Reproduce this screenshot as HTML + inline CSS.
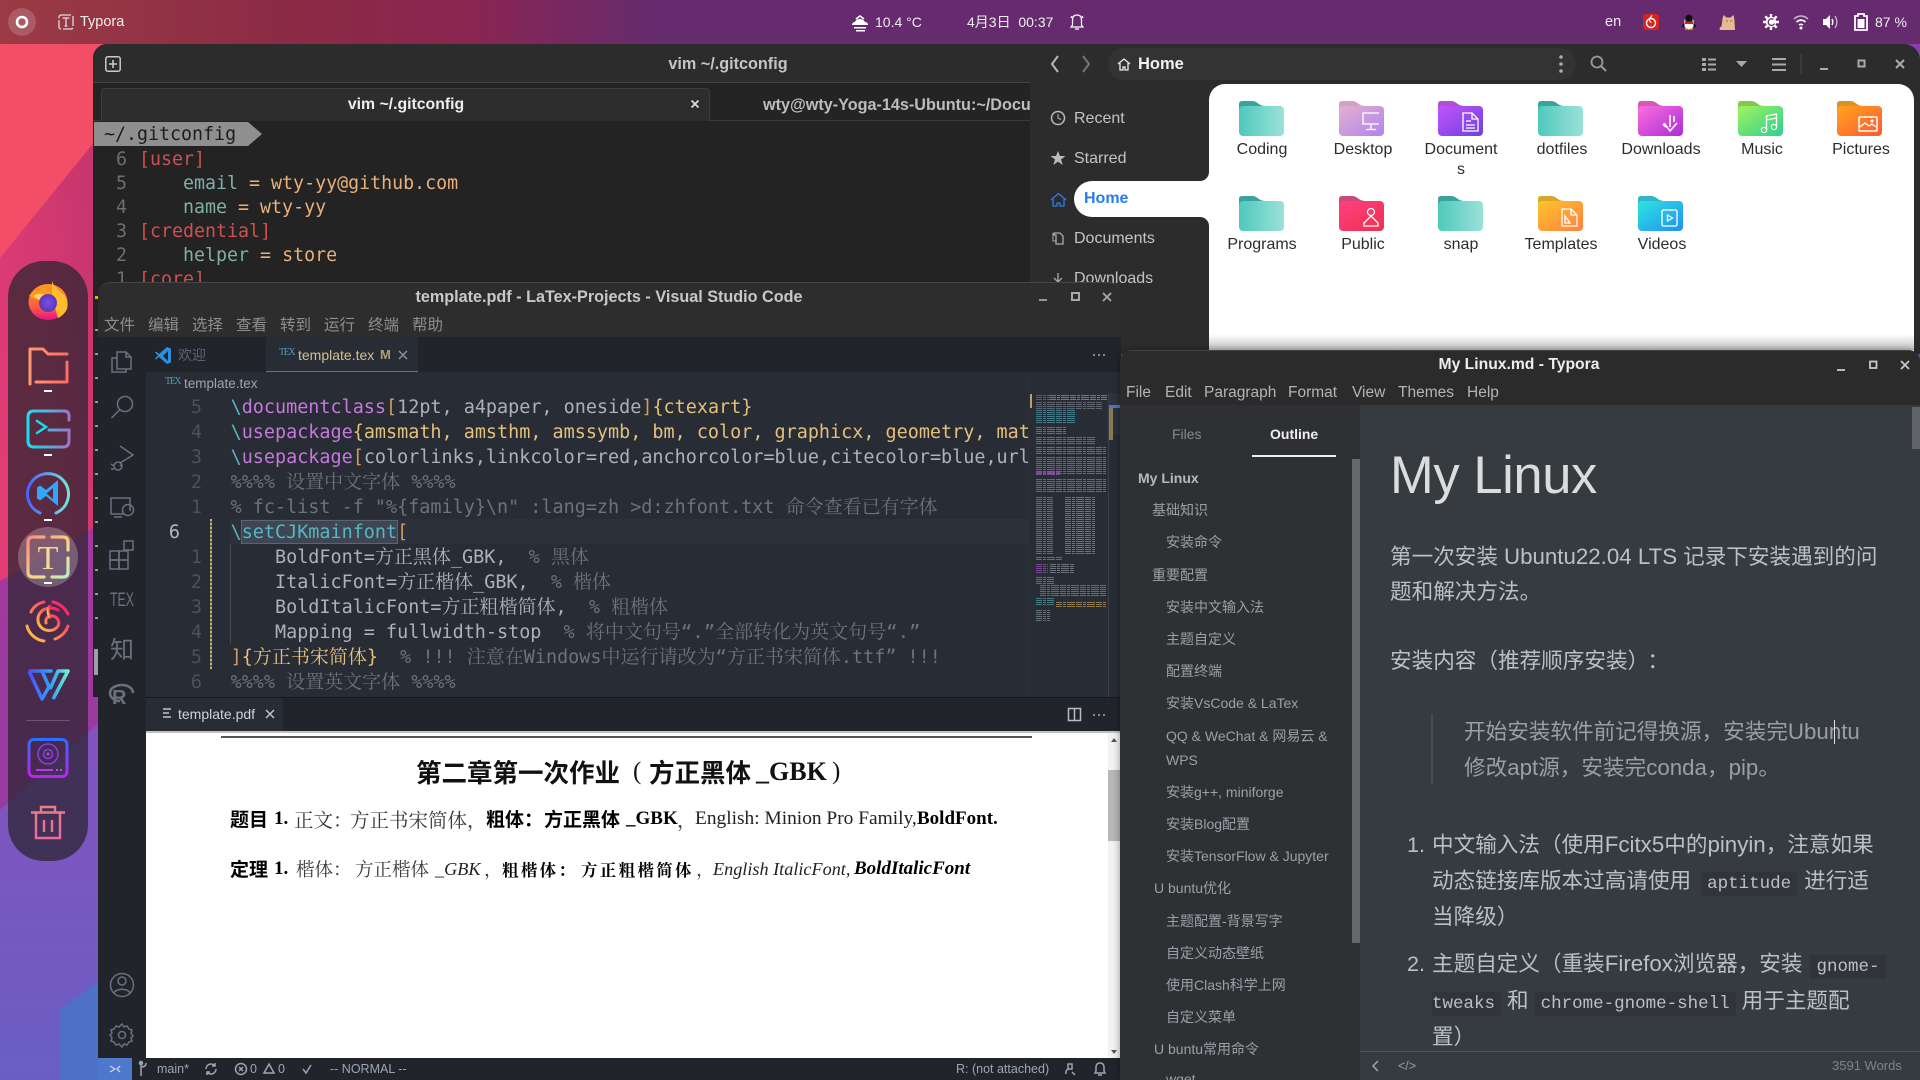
<!DOCTYPE html>
<html lang="zh"><head><meta charset="utf-8"><title>Desktop</title>
<style>
*{box-sizing:border-box;margin:0;padding:0}
html,body{width:1920px;height:1080px;overflow:hidden;background:#662b6e}
body{position:relative;font-family:"Liberation Sans","Noto Sans CJK SC",sans-serif}
.a{position:absolute;white-space:pre}
.c{transform:translateX(-50%)}
svg{position:absolute;overflow:visible}
.tl{position:absolute;font:18.3px/24px "DejaVu Sans Mono",monospace;white-space:pre;margin-top:2px}
.cl{position:absolute;left:84.6px;height:25px;font:18.45px/25px "DejaVu Sans Mono","Noto Serif CJK SC",monospace;white-space:pre;color:#abb2bf;margin-top:1px}
.z{font-size:19px}
.n{position:absolute;width:40px;text-align:right;left:16px;font:18.45px/25px "DejaVu Sans Mono",monospace;color:#495162;margin-top:1px}
.g{color:#6b7280}.p{color:#c678dd}.o{color:#d19a66}.y{color:#e5c07b}.t{color:#56b6c2}
.out{position:absolute;font-size:14px;line-height:20px;color:#9aa0a6;white-space:pre}
.ty{position:absolute;font-size:21.6px;line-height:30px;color:#b9c0c7;white-space:pre}
.e{font-size:22.3px}
.code{font:17.5px "Liberation Mono",monospace;background:#31353a;padding:2px 6px;color:#b9c0c7}
.fl{position:absolute;font-size:16px;line-height:20px;color:#2c2c2c;transform:translateX(-50%);white-space:pre;margin-top:2px}
.side{position:absolute;left:1074px;font-size:16px;line-height:20px;color:#c4c4c4;white-space:pre;margin-top:1px}
.m{position:absolute;font-size:15.5px;line-height:20px;color:#8e8e8e;font-family:"Noto Sans CJK SC",sans-serif}
.mm{position:absolute;background:repeating-linear-gradient(180deg,var(--c) 0 1px,transparent 1px 2px);opacity:.7;-webkit-mask-image:repeating-linear-gradient(90deg,#000 0 6px,transparent 6px 7px,#000 7px 10px,transparent 10px 11px,#000 11px 19px,transparent 19px 20px);mask-image:repeating-linear-gradient(90deg,#000 0 6px,transparent 6px 7px,#000 7px 10px,transparent 10px 11px,#000 11px 19px,transparent 19px 20px)}
.tex{position:absolute;font:10px/18px "Liberation Serif",serif;letter-spacing:-1.4px;color:#4f9bb8}
.pp{position:absolute;line-height:28px;white-space:pre;color:#000}
.s1{font:19.5px/28px "Noto Serif CJK SC",serif;color:#3a3a3a}
.s2{font:bold 19px/28px "Noto Sans CJK SC",sans-serif;color:#000}
.s3{font:19.4px/28px "Liberation Serif",serif;color:#222}
.s4{font:bold 19px/28px "Liberation Serif",serif;color:#000}
.s5{font:18.5px/28px "Noto Serif CJK SC",serif;color:#3a3a3a}
.s6{font:bold 16.5px/28px "Noto Serif CJK SC",serif;color:#000;letter-spacing:2.3px}
.s7{font:italic 18.2px/28px "Liberation Serif",serif;color:#222}
.s8{font:italic bold 19px/28px "Liberation Serif",serif;color:#000}
.ti{position:absolute;top:755px;font:bold 25.5px/34px "Noto Sans CJK SC",sans-serif;color:#111;white-space:pre}
</style></head><body>

<!-- wallpaper -->
<svg style="left:0;top:0" width="1920" height="1080" viewBox="0 0 1920 1080">
<defs>
<linearGradient id="w2" x1="0" y1="1" x2="1" y2="0"><stop offset="0" stop-color="#f03f7c"/><stop offset="1" stop-color="#c4356c"/></linearGradient>
<linearGradient id="w3" x1="0" y1="0" x2="0" y2="1"><stop offset="0" stop-color="#a23a9e"/><stop offset="1" stop-color="#8e3aa2"/></linearGradient>
<linearGradient id="w4" x1="0" y1="0" x2="0" y2="1"><stop offset="0" stop-color="#8452be"/><stop offset="1" stop-color="#6a5ec4"/></linearGradient>
</defs>
<rect width="1920" height="1080" fill="#f34e67"/>
<polygon points="100,135 0,258 0,1080 100,1080" fill="url(#w2)"/>
<polygon points="100,524 0,581 0,1080 100,1080" fill="url(#w3)"/>
<polygon points="100,722 0,810 0,1080 100,1080" fill="url(#w4)"/>
<polygon points="100,980 60,1010 60,1080 100,1080" fill="#4e70c6"/>
<rect x="1000" y="40" width="920" height="320" fill="#8a3cb0"/>
</svg>

<!-- top bar -->
<div class="a" style="left:0;top:0;width:1920px;height:44px;background:linear-gradient(90deg,#9a3b45 0,#8c2b45 280px,#8a2550 470px,#662b6e 650px,#662b6e 100%)"></div>
<svg style="left:0;top:0" width="1920" height="44" viewBox="0 0 1920 44">
<circle cx="22" cy="22" r="14" fill="#fff" fill-opacity=".17"/>
<circle cx="22" cy="22" r="5" fill="none" stroke="#fff" stroke-width="2.6"/>
<rect x="59" y="15" width="14" height="14" rx="2" fill="none" stroke="#ddd" stroke-width="1.3" stroke-dasharray="10 2"/>
<path d="M62.5 18h7M66 18v8M64.5 26h3" stroke="#ddd" stroke-width="1.3" fill="none"/>
<path d="M852 25c0-2 1.5-3 3-3 1-4 8-4 10 0 2 0 3 1.5 3 3z" fill="#fff"/><path d="M854 27h12v1.5h-12zM856 30h9v1.5h-9z" fill="#fff"/><path d="M856 19l4-3 4 3" stroke="#fff" stroke-width="1.6" fill="none"/>
<path d="M1077 15c-3 0-4.5 2-4.5 5v5l-1.5 2h12l-1.5-2v-5c0-3-1.5-5-4.5-5zM1075 29h4M1072 16l-1 2M1082 16l1 2" fill="none" stroke="#fff" stroke-width="1.2"/>
<rect x="1643" y="14" width="16" height="16" rx="3" fill="#d9241b"/><circle cx="1651" cy="23" r="4.5" fill="none" stroke="#fff" stroke-width="1.4"/><path d="M1652 15.5l-2 2.5c-1 1.500-.5 4 1.500 4.500" stroke="#fff" stroke-width="1.2" fill="none"/>
<ellipse cx="1689" cy="23" rx="5" ry="6.5" fill="#fff"/><ellipse cx="1689" cy="19" rx="3.8" ry="4.5" fill="#111"/><rect x="1684.5" y="21.5" width="9" height="2.5" fill="#d81e28"/><path d="M1685 29h3M1690 29h3" stroke="#e8a020" stroke-width="1.5"/><path d="M1684 24l-1.5 3M1694 24l1.5 3" stroke="#111" stroke-width="1.8"/>
<path d="M1720 30c-1-2 0-3 1.5-3.500l1-7.500 1-4 3 2.500h4l3-2.500.8 4 .7 11z" fill="#e4bc92"/><circle cx="1727" cy="21" r=".7" fill="#654"/><circle cx="1731" cy="21" r=".7" fill="#654"/>
<circle cx="1771" cy="22" r="5.3" fill="#fff"/><path d="M1771 14v16M1763 22h16M1765.3 16.3l11.4 11.4M1776.7 16.3l-11.4 11.4" stroke="#fff" stroke-width="2.4"/><path d="M1773.5 19.5a3.3 3.3 0 1 0 1 4" fill="none" stroke="#662b6e" stroke-width="1.3"/>
<path d="M1794 19c4-4 10-4 14 0" stroke="#cdb7d2" stroke-width="1.5" fill="none"/><path d="M1796.5 22c3-2.5 6-2.5 9 0M1799 25c1.5-1 2.5-1 4 0" stroke="#fff" stroke-width="1.6" fill="none"/><circle cx="1801" cy="28" r="1.5" fill="#fff"/>
<path d="M1823 19h3l4-4v14l-4-4h-3z" fill="#fff"/><path d="M1832 19c1 2 1 4 0 6" stroke="#fff" stroke-width="1.5" fill="none"/><path d="M1835 16c2.5 4 2.500 8 0 12" stroke="#c8aecd" stroke-width="1.3" fill="none"/>
<path d="M1858 16v-2h6v2h3v14h-12v-14z" fill="none" stroke="#fff" stroke-width="1.8"/><rect x="1857.5" y="19" width="7" height="9" fill="#fff"/>
</svg>
<div class="a" style="left:80px;top:12px;font-size:14.5px;line-height:20px;color:#eee">Typora</div>
<div class="a" style="left:875px;top:12px;font-size:14px;line-height:20px;color:#eee">10.4 °C</div>
<div class="a" style="left:967px;top:12px;font-size:14px;line-height:20px;color:#eee">4月3日  00:37</div>
<div class="a" style="left:1605px;top:12px;font-size:14.5px;line-height:20px;color:#eee">en</div>
<div class="a" style="left:1875px;top:12px;font-size:14px;line-height:20px;color:#eee">87 %</div>

<!-- terminal -->
<div class="a" style="left:93px;top:44px;width:950px;height:653px;background:#232323;border-radius:14px 0 0 0;overflow:hidden">
<div class="a" style="left:0;top:0;width:950px;height:39px;background:#2c2c2c;border-bottom:1px solid #444"></div>
<div class="a" style="left:0;top:39px;width:950px;height:38px;background:#242424;border-bottom:1px solid #3a3a3a"></div>
<div class="a" style="left:8px;top:44px;width:609px;height:33px;background:#2d2d2d;border:1px solid #3d3d3d;border-bottom:0;border-radius:4px 4px 0 0"></div>
<div class="a c" style="left:635px;top:10px;font-size:16.2px;font-weight:bold;line-height:20px;color:#c4c4c4">vim ~/.gitconfig</div>
<div class="a c" style="left:313px;top:51px;font-size:15.8px;font-weight:bold;line-height:20px;color:#eee">vim ~/.gitconfig</div>
<div class="a" style="left:670px;top:51px;font-size:16.2px;font-weight:bold;line-height:20px;color:#bdbdbd">wty@wty-Yoga-14s-Ubuntu:~/Documents</div>
<div class="a" style="left:1px;top:78px;width:154px;height:24px;background:#8f8f8f"></div>
<div class="tl" style="left:11px;top:78px;color:#1c1c1c;margin-top:1px">~/.gitconfig</div>
<svg style="left:155px;top:78px" width="14" height="24"><path d="M0 0L14 12L0 24Z" fill="#8f8f8f"/></svg>
<div class="tl" style="left:23px;top:102px;color:#6e6e6e">6</div><div class="tl" style="left:46px;top:102px;color:#d0504f">[user]</div>
<div class="tl" style="left:23px;top:126px;color:#6e6e6e">5</div><div class="tl" style="left:90px;top:126px;color:#e8b07c"><span style="color:#7fb0a8">email</span> = wty-yy@github.com</div>
<div class="tl" style="left:23px;top:150px;color:#6e6e6e">4</div><div class="tl" style="left:90px;top:150px;color:#e8b07c"><span style="color:#7fb0a8">name</span> = wty-yy</div>
<div class="tl" style="left:23px;top:174px;color:#6e6e6e">3</div><div class="tl" style="left:46px;top:174px;color:#d0504f">[credential]</div>
<div class="tl" style="left:23px;top:198px;color:#6e6e6e">2</div><div class="tl" style="left:90px;top:198px;color:#e8b07c"><span style="color:#7fb0a8">helper</span> = store</div>
<div class="tl" style="left:23px;top:222px;color:#6e6e6e">1</div><div class="tl" style="left:46px;top:222px;color:#d0504f">[core]</div>
<svg style="left:12px;top:12px" width="16" height="16"><rect x=".8" y=".8" width="14.4" height="14.4" rx="2" fill="none" stroke="#c8c8c8" stroke-width="1.5"/><path d="M8 4v8M4 8h8" stroke="#c8c8c8" stroke-width="1.6"/></svg>
<svg style="left:597px;top:55px" width="10" height="10"><path d="M1.5 1.5l7 7M8.5 1.5l-7 7" stroke="#ddd" stroke-width="1.8"/></svg>
<div class="a" style="left:2px;top:252px;width:3px;height:3px;background:#d8b020"></div>
<div class="a" style="left:2px;top:285px;width:3px;height:310px;background:repeating-linear-gradient(180deg,#9a9a9a 0 2px,transparent 2px 24px)"></div>
<div class="a" style="left:1px;top:605px;width:4px;height:26px;background:#a0a0a0"></div>
</div>

<!-- nautilus -->
<div class="a" style="left:1030px;top:44px;width:890px;height:310px;background:#2c2c2c;border-radius:16px 16px 0 0;overflow:hidden">
<div class="a" style="left:179px;top:40px;width:705px;height:280px;background:#fff;border-radius:16px 16px 0 0"></div>
<div class="a" style="left:179px;top:290px;width:705px;height:16px;background:linear-gradient(180deg,#fff,#c4c4c4)"></div>
<div class="a" style="left:167px;top:125px;width:12px;height:60px;background:#fff"></div>
<div class="a" style="left:155px;top:113px;width:24px;height:24px;background:#2c2c2c;border-radius:0 0 9px 0"></div>
<div class="a" style="left:155px;top:173px;width:24px;height:24px;background:#2c2c2c;border-radius:0 9px 0 0"></div>
<div class="a" style="left:44px;top:137px;width:135px;height:36px;background:#fff;border-radius:18px 0 0 18px"></div>
<div class="a" style="left:78px;top:4px;width:468px;height:32px;background:#333;border-radius:16px"></div>
</div>
<div class="a" style="left:1138px;top:54px;font-size:16.5px;font-weight:bold;line-height:20px;color:#f2f2f2">Home</div>
<div class="side" style="top:108px">Recent</div>
<div class="side" style="top:148px">Starred</div>
<div class="side" style="top:188px;left:1084px;color:#2a7bf0;font-weight:bold">Home</div>
<div class="side" style="top:228px">Documents</div>
<div class="side" style="top:268px">Downloads</div>
<svg style="left:1030px;top:44px" width="890" height="240" viewBox="1030 44 890 240">
<path d="M1058 56l-6 8 6 8" stroke="#b8b8b8" stroke-width="2" fill="none"/><path d="M1083 56l6 8-6 8" stroke="#777" stroke-width="2" fill="none"/>
<path d="M1118 64l6-5 6 5M1120 63v7h3v-3h2v3h3v-7" stroke="#eee" stroke-width="1.3" fill="none"/>
<circle cx="1561" cy="57" r="1.8" fill="#aaa"/><circle cx="1561" cy="64" r="1.8" fill="#aaa"/><circle cx="1561" cy="71" r="1.8" fill="#aaa"/>
<circle cx="1597" cy="62" r="5.5" fill="none" stroke="#999" stroke-width="1.8"/><path d="M1601 66l5 5" stroke="#999" stroke-width="2"/>
<path d="M1702 58h4v3h-4zM1702 63h4v3h-4zM1702 68h4v3h-4z" fill="#aaa"/><path d="M1708 59.5h8M1708 64.5h8M1708 69.5h8" stroke="#aaa" stroke-width="2"/>
<path d="M1736 61h11l-5.5 6z" fill="#aaa"/>
<path d="M1772 59h14M1772 64.5h14M1772 70h14" stroke="#aaa" stroke-width="2"/>
<path d="M1801 54v20" stroke="#4a4a4a"/>
<path d="M1820 69h8" stroke="#aaa" stroke-width="2"/><rect x="1858.5" y="60.5" width="6" height="6" fill="none" stroke="#aaa" stroke-width="2"/><path d="M1896 60l8 8M1904 60l-8 8" stroke="#aaa" stroke-width="2"/>
<circle cx="1058" cy="118" r="6.5" fill="none" stroke="#bbb" stroke-width="1.5"/><path d="M1058 114v4l3 1.5" stroke="#bbb" fill="none"/>
<path d="M1058 151l2 5h5.500l-4.500 3.500 1.700 5.500-4.700-3.400-4.700 3.400 1.700-5.500-4.500-3.500h5.500z" fill="#bbb"/>
<path d="M1051 200l7.500-6.500 7.500 6.500M1053 199v7h4v-3h3v3h4v-7" stroke="#2a7bf0" stroke-width="1.3" fill="none"/>
<path d="M1054 233h6l3 3v8h-7v-9h-2z" fill="none" stroke="#aaa" stroke-width="1.3"/><path d="M1053 233v8h3" fill="none" stroke="#aaa"/>
<path d="M1058 273v8M1054 278l4 4 4-4" fill="none" stroke="#aaa" stroke-width="1.3"/>
</svg>
<!-- folders -->
<svg style="left:1230px;top:95px" width="680" height="150" viewBox="1230 95 680 150">
<defs>
<linearGradient id="ft"><stop offset="0" stop-color="#4fc9bd"/><stop offset="1" stop-color="#9be1d8"/></linearGradient>
<linearGradient id="fd" x1="0" y1="0" x2="1" y2="1"><stop offset="0" stop-color="#e5b0ce"/><stop offset="1" stop-color="#ae84f0"/></linearGradient>
<linearGradient id="fo" x1="0" y1="0" x2="1" y2="1"><stop offset="0" stop-color="#c454fa"/><stop offset="1" stop-color="#6c40e0"/></linearGradient>
<linearGradient id="fw" x1="0" y1="0" x2="1" y2="1"><stop offset="0" stop-color="#fa6edc"/><stop offset="1" stop-color="#ae2cd8"/></linearGradient>
<linearGradient id="fm" x1="0" y1="0" x2="1" y2="1"><stop offset="0" stop-color="#a2f25e"/><stop offset="1" stop-color="#2cd090"/></linearGradient>
<linearGradient id="fp" x1="0" y1="0" x2="1" y2="1"><stop offset="0" stop-color="#ffa41c"/><stop offset="1" stop-color="#ff5834"/></linearGradient>
<linearGradient id="fu" x1="0" y1="0" x2="1" y2="1"><stop offset="0" stop-color="#ff4080"/><stop offset="1" stop-color="#ef3050"/></linearGradient>
<linearGradient id="fl" x1="0" y1="0" x2="1" y2="1"><stop offset="0" stop-color="#ffc42c"/><stop offset="1" stop-color="#ff8040"/></linearGradient>
<linearGradient id="fv" x1="0" y1="0" x2="1" y2="1"><stop offset="0" stop-color="#2ee4e0"/><stop offset="1" stop-color="#2090f0"/></linearGradient>
<path id="ftab" d="M0 9V3q0-3 3-3h10c6 0 6 5 14 5v4z"/>
<rect id="fb" y="5" width="45" height="30" rx="4"/>
</defs>
<g transform="translate(1239,101)"><use href="#ftab" fill="#3aa39c"/><use href="#fb" fill="url(#ft)"/></g>
<g transform="translate(1339,101)"><use href="#ftab" fill="#d4a2bc"/><use href="#fb" fill="url(#fd)"/><g fill="none" stroke="#fff" stroke-width="1.3"><path d="M40 12H24v11h16M32 23v5M27 28.5h10"/></g></g>
<g transform="translate(1438,101)"><use href="#ftab" fill="#b050d6"/><use href="#fb" fill="url(#fo)"/><g fill="none" stroke="#fff" stroke-width="1.3"><path d="M25 12h9l6 6v12H25zM34 12v6h6M28 20h5M28 24h9M28 27h9"/></g></g>
<g transform="translate(1538,101)"><use href="#ftab" fill="#3aa39c"/><use href="#fb" fill="url(#ft)"/></g>
<g transform="translate(1638,101)"><use href="#ftab" fill="#d458b4"/><use href="#fb" fill="url(#fw)"/><g fill="none" stroke="#fff" stroke-width="1.6"><path d="M32 14v12M25 23c1 2 3 3 4 3M26 22l6 8 7-8M36 15v6"/></g></g>
<g transform="translate(1738,101)"><use href="#ftab" fill="#86c648"/><use href="#fb" fill="url(#fm)"/><g fill="none" stroke="#fff" stroke-width="1.3"><circle cx="26" cy="29" r="2.6"/><circle cx="36" cy="26" r="2.6"/><path d="M28.5 29V15l10-2v13M28.5 19l10-2"/></g></g>
<g transform="translate(1837,101)"><use href="#ftab" fill="#d89228"/><use href="#fb" fill="url(#fp)"/><rect x="22" y="16" width="18" height="14" rx="1" fill="none" stroke="#fff" stroke-width="1.5"/><path d="M23 26l5-4 4 3 3-2 4 3" stroke="#fff" fill="none" stroke-width="1.3"/><circle cx="35" cy="20" r="1.5" fill="#fff"/></g>
<g transform="translate(1239,196)"><use href="#ftab" fill="#3aa39c"/><use href="#fb" fill="url(#ft)"/></g>
<g transform="translate(1339,196)"><use href="#ftab" fill="#cc4878"/><use href="#fb" fill="url(#fu)"/><g fill="none" stroke="#fff" stroke-width="1.3"><circle cx="32" cy="16" r="3.5"/><path d="M32 20l7 7v3H25v-3z"/></g></g>
<g transform="translate(1438,196)"><use href="#ftab" fill="#3aa39c"/><use href="#fb" fill="url(#ft)"/></g>
<g transform="translate(1538,196)"><use href="#ftab" fill="#d8a82e"/><use href="#fb" fill="url(#fl)"/><g fill="none" stroke="#fff" stroke-width="1.3"><path d="M24 13h9l6 6v11H24zM33 13v6h6M27 20l5 7h-5z"/></g></g>
<g transform="translate(1638,196)"><use href="#ftab" fill="#2eb8c6"/><use href="#fb" fill="url(#fv)"/><g fill="none" stroke="#fff" stroke-width="1.3"><rect x="24" y="14" width="15" height="16" rx="1.5"/><path d="M29.5 19l5 3-5 3z"/></g></g>
</svg>
<div class="fl" style="left:1262px;top:138px">Coding</div>
<div class="fl" style="left:1363px;top:138px">Desktop</div>
<div class="fl" style="left:1461px;top:138px">Document</div>
<div class="fl" style="left:1461px;top:158px">s</div>
<div class="fl" style="left:1562px;top:138px">dotfiles</div>
<div class="fl" style="left:1661px;top:138px">Downloads</div>
<div class="fl" style="left:1762px;top:138px">Music</div>
<div class="fl" style="left:1861px;top:138px">Pictures</div>
<div class="fl" style="left:1262px;top:233px">Programs</div>
<div class="fl" style="left:1363px;top:233px">Public</div>
<div class="fl" style="left:1461px;top:233px">snap</div>
<div class="fl" style="left:1561px;top:233px">Templates</div>
<div class="fl" style="left:1662px;top:233px">Videos</div>

<!-- vscode -->
<div class="a" style="left:98px;top:282px;width:1023px;height:798px;background:#21252b;border-radius:12px 12px 0 0;overflow:hidden;border-top:1px solid #444">
<div class="a" style="left:0;top:0;width:1023px;height:54px;background:#2d2d2d"></div>
<div class="a c" style="left:511px;top:4px;font-size:16.2px;font-weight:bold;line-height:20px;color:#c8c8c8">template.pdf - LaTex-Projects - Visual Studio Code</div>
<div class="m" style="left:6px;top:31px">文件</div><div class="m" style="left:50px;top:31px">编辑</div><div class="m" style="left:94px;top:31px">选择</div><div class="m" style="left:138px;top:31px">查看</div><div class="m" style="left:182px;top:31px">转到</div><div class="m" style="left:226px;top:31px">运行</div><div class="m" style="left:270px;top:31px">终端</div><div class="m" style="left:314px;top:31px">帮助</div>
</div>
<div class="a" style="left:146px;top:372px;width:975px;height:325px;background:#282c34"></div>
<div class="a" style="left:266px;top:337px;width:152px;height:35px;background:#282c34;border-bottom:1px solid #6a6f78"></div>
<div class="a" style="left:146px;top:697px;width:975px;height:35px;background:#21252b;border-top:1px solid #16181c"></div>
<div class="a" style="left:146px;top:697px;width:137px;height:35px;background:#282c34;border-top:1px solid #16181c;border-bottom:1px solid #8a8f96"></div>
<div class="a" style="left:146px;top:732px;width:975px;height:326px;background:#fff"></div>
<div class="a" style="left:146px;top:731px;width:975px;height:2px;background:#c0c0c0"></div>
<div class="a" style="left:98px;top:1058px;width:1023px;height:22px;background:#21252b"></div>
<div class="a" style="left:98px;top:1058px;width:34px;height:22px;background:#4d78cc"></div>

<!-- tabs text -->
<div class="a" style="left:178px;top:345px;font:14px/20px 'Noto Sans CJK SC',sans-serif;color:#5c6370">欢迎</div>
<div class="tex" style="left:279px;top:344px">TEX</div>
<div class="a" style="left:298px;top:345px;font-size:14px;line-height:20px;color:#d7c08c">template.tex</div>
<div class="a" style="left:380px;top:345px;font-size:13px;font-weight:bold;line-height:20px;color:#b0a070">M</div>
<div class="tex" style="left:165px;top:373px">TEX</div>
<div class="a" style="left:184px;top:374px;font-size:13.5px;line-height:20px;color:#9da5b4">template.tex</div>
<div class="a" style="left:178px;top:704px;font-size:14px;line-height:20px;color:#d0d4da">template.pdf</div>

<!-- code -->
<div class="a" style="left:146px;top:394px;width:882px;height:303px;overflow:hidden">
<div class="a" style="left:84px;top:125px;width:798px;height:25px;background:#2c313c"></div>
<div class="a" style="left:95px;top:126px;width:157px;height:24px;background:#3e4653;border:1px solid #5b6472"></div>
<div class="a" style="left:64px;top:125px;width:2px;height:150px;background:repeating-linear-gradient(180deg,#c9b56f 0 2px,#6b6448 2px 4px)"></div>
<div class="a" style="left:84px;top:150px;width:1px;height:100px;background:#444a55"></div>
<div class="n" style="top:0">5</div><div class="n" style="top:25px">4</div><div class="n" style="top:50px">3</div><div class="n" style="top:75px">2</div><div class="n" style="top:100px">1</div>
<div class="n" style="top:125px;left:-6px;color:#b3bac6">6</div>
<div class="n" style="top:150px">1</div><div class="n" style="top:175px">2</div><div class="n" style="top:200px">3</div><div class="n" style="top:225px">4</div><div class="n" style="top:250px">5</div><div class="n" style="top:275px">6</div>
<div class="cl" style="top:0"><span class="t">\</span><span class="p">documentclass</span><span class="o">[</span>12pt, a4paper, oneside<span class="o">]</span><span class="y">{ctexart}</span></div>
<div class="cl" style="top:25px"><span class="t">\</span><span class="p">usepackage</span><span class="y">{amsmath, amsthm, amssymb, bm, color, graphicx, geometry, mathtools}</span></div>
<div class="cl" style="top:50px"><span class="t">\</span><span class="p">usepackage</span><span class="o">[</span>colorlinks,linkcolor=red,anchorcolor=blue,citecolor=blue,urlcolor=blue<span class="o">]</span></div>
<div class="cl g" style="top:75px">%%%% <span class="z">设置中文字体</span> %%%%</div>
<div class="cl g" style="top:100px">% fc-list -f "%{family}\n" :lang=zh &gt;d:zhfont.txt <span class="z">命令查看已有字体</span></div>
<div class="cl" style="top:125px"><span class="t">\setCJKmainfont</span><span class="o">[</span></div>
<div class="cl" style="top:150px">    BoldFont=<span class="z">方正黑体</span>_GBK,  <span class="g">% <span class="z">黑体</span></span></div>
<div class="cl" style="top:175px">    ItalicFont=<span class="z">方正楷体</span>_GBK,  <span class="g">% <span class="z">楷体</span></span></div>
<div class="cl" style="top:200px">    BoldItalicFont=<span class="z">方正粗楷简体</span>,  <span class="g">% <span class="z">粗楷体</span></span></div>
<div class="cl" style="top:225px">    Mapping = fullwidth-stop  <span class="g">% <span class="z">将中文句号“.”全部转化为英文句号“.”</span></span></div>
<div class="cl" style="top:250px"><span class="o">]</span><span class="y">{<span class="z">方正书宋简体</span>}</span>  <span class="g">% !!! <span class="z">注意在</span>Windows<span class="z">中运行请改为“方正书宋简体</span>.ttf” !!!</span></div>
<div class="cl g" style="top:275px">%%%% <span class="z">设置英文字体</span> %%%%</div>
</div>

<!-- minimap -->
<div class="a" style="left:1028px;top:372px;width:93px;height:325px;background:#282c34;border-left:1px solid #2d3139"></div>
<div class="a" style="left:1108px;top:393px;width:1px;height:304px;background:#3a3f4a"></div>
<div class="a" style="left:1109px;top:393px;width:12px;height:42px;background:#2f333b"></div>
<div class="a" style="left:1109px;top:405px;width:12px;height:3px;background:#4d78cc"></div>
<div class="a" style="left:1109px;top:408px;width:4px;height:32px;background:#8a7a50"></div>
<div class="a" style="left:1030px;top:394px;width:2px;height:14px;background:#b8a566"></div>
<div class="mm" style="--c:#a050c0;left:1036px;top:395px;width:14px;height:6px"></div>
<div class="mm" style="--c:#b89858;left:1050px;top:395px;width:57px;height:6px"></div>
<div class="mm" style="--c:#777d88;left:1036px;top:402px;width:66px;height:8px"></div>
<div class="mm" style="--c:#4f9ea8;left:1036px;top:410px;width:40px;height:14px"></div>
<div class="mm" style="--c:#4f9ea8;left:1036px;top:427px;width:30px;height:7px"></div>
<div class="mm" style="--c:#7a8a90;left:1036px;top:437px;width:60px;height:7px"></div>
<div class="mm" style="--c:#4f9ea8;left:1036px;top:447px;width:70px;height:8px"></div>
<div class="mm" style="--c:#35a8b0;left:1036px;top:457px;width:70px;height:18px"></div>
<div class="mm" style="--c:#a050c0;left:1036px;top:472px;width:24px;height:3px"></div>
<div class="mm" style="--c:#35a8b0;left:1036px;top:479px;width:70px;height:14px"></div>
<div class="mm" style="--c:#35a8b0;left:1036px;top:497px;width:17px;height:58px"></div>
<div class="mm" style="--c:#8a909a;left:1065px;top:497px;width:30px;height:58px"></div>
<div class="mm" style="--c:#4f9ea8;left:1036px;top:557px;width:26px;height:4px"></div>
<div class="mm" style="--c:#a050c0;left:1036px;top:564px;width:12px;height:10px"></div>
<div class="mm" style="--c:#8a909a;left:1050px;top:564px;width:24px;height:10px"></div>
<div class="mm" style="--c:#4f9ea8;left:1036px;top:577px;width:18px;height:8px"></div>
<div class="mm" style="--c:#35a8b0;left:1040px;top:585px;width:66px;height:12px"></div>
<div class="mm" style="--c:#4f9ea8;left:1036px;top:598px;width:18px;height:8px"></div>
<div class="mm" style="--c:#b89858;left:1056px;top:602px;width:50px;height:6px"></div>
<div class="mm" style="--c:#7a8a90;left:1036px;top:610px;width:14px;height:12px"></div>

<!-- pdf -->
<div class="a" style="left:221px;top:736px;width:811px;height:2px;background:#555"></div>
<div class="ti" style="left:416px">第二章第一次作业</div>
<div class="ti" style="left:633px;font:25px/34px 'Liberation Serif',serif">(</div>
<div class="ti" style="left:649px">方正黑体</div>
<div class="ti" style="left:756px;font:bold 26px/34px 'Liberation Serif',serif">_GBK</div>
<div class="ti" style="left:832px;font:25px/34px 'Liberation Serif',serif">)</div>

<div class="pp s2" style="left:230px;top:805px">题目</div>
<div class="pp s4" style="left:274px;top:805px">1.</div>
<div class="pp s1" style="left:294px;top:805px">正文：</div>
<div class="pp s1" style="left:350px;top:805px">方正书宋简体，</div>
<div class="pp s2" style="left:486px;top:805px">粗体：</div>
<div class="pp s2" style="left:544px;top:805px">方正黑体</div>
<div class="pp s4" style="left:626px;top:805px">_GBK</div>
<div class="pp s1" style="left:677px;top:805px">，</div>
<div class="pp s3" style="left:695px;top:805px">English: Minion Pro Family,</div>
<div class="pp s4" style="left:917px;top:805px">BoldFont.</div>

<div class="pp s2" style="left:230px;top:855px">定理</div>
<div class="pp s4" style="left:274px;top:855px">1.</div>
<div class="pp s5" style="left:296px;top:855px">楷体：</div>
<div class="pp s5" style="left:355px;top:855px">方正楷体</div>
<div class="pp s7" style="left:435px;top:855px">_GBK</div>
<div class="pp s5" style="left:484px;top:855px">，</div>
<div class="pp s6" style="left:502px;top:855px">粗楷体：</div>
<div class="pp s6" style="left:581px;top:855px">方正粗楷简体</div>
<div class="pp s5" style="left:696px;top:855px">，</div>
<div class="pp s7" style="left:713px;top:855px">English ItalicFont,</div>
<div class="pp s8" style="left:854px;top:855px">BoldItalicFont</div>

<div class="a" style="left:1108px;top:733px;width:12px;height:325px;background:#f3f3f3"></div>
<div class="a" style="left:1108px;top:770px;width:12px;height:71px;background:#b8b8b8"></div>

<!-- status bar text -->
<div class="a" style="left:157px;top:1060px;font-size:12.5px;line-height:18px;color:#9da5b4">main*</div>
<div class="a" style="left:250px;top:1060px;font-size:12.5px;line-height:18px;color:#9da5b4">0</div>
<div class="a" style="left:278px;top:1060px;font-size:12.5px;line-height:18px;color:#9da5b4">0</div>
<div class="a" style="left:330px;top:1060px;font-size:12.5px;line-height:18px;color:#9da5b4">-- NORMAL --</div>
<div class="a" style="left:956px;top:1060px;font-size:12.5px;line-height:18px;color:#9da5b4">R: (not attached)</div>

<!-- vscode icons -->
<svg style="left:98px;top:282px" width="1023" height="798" viewBox="98 282 1023 798">
<g fill="none" stroke="#6a707c" stroke-width="1.5">
<path d="M1039 300h8M1103 293l8 8M1111 293l-8 8" stroke="#a8a8a8" stroke-width="1.8"/><rect x="1072" y="293" width="7" height="7" stroke="#a8a8a8" stroke-width="2"/>
<path d="M117 352h9l5 5v12h-14zM126 352v5h5M117 358h-5v14h14v-3"/>
<circle cx="125" cy="404" r="7.5"/><path d="M119.5 410l-8 8"/>
<path d="M120 446l13 9-13 8M118 462a4 4 0 1 0 0 8 4 4 0 0 0 0-8zM111 464l3 2M111 469h3M122 464l-2 2"/>
<path d="M130 511v-13h-19v16h13M114 517h8"/><circle cx="128" cy="510" r="5.5"/>
<rect x="110" y="551" width="9" height="9"/><rect x="119" y="551" width="9" height="9"/><rect x="110" y="560" width="9" height="9"/><rect x="119" y="560" width="9" height="9"/><rect x="124" y="541" width="9" height="9"/>
<circle cx="122" cy="985" r="11.5"/><circle cx="122" cy="981" r="4"/><path d="M114 993c2-5 14-5 16 0"/>
<path d="M122 1024l2 3 3-1 2 3 3 1-1 3 2 3-2 2 1 3-3 1-2 3-3-1-2 3-3-3-3 1-2-3-3-1 1-3-2-3 2-2-1-3 3-1 2-3 3 1z"/><circle cx="122" cy="1035" r="3.5"/>
<path d="M399 351l8 8M407 351l-8 8" stroke="#8a909a"/>
<path d="M266 710l8 8M274 710l-8 8" stroke="#c0c4ca"/>
<rect x="1068.5" y="708.5" width="12" height="12" stroke="#b8bcc4"/><path d="M1074.5 708.5v12" stroke="#b8bcc4"/>
<path d="M163 709h8M163 713h6M163 717h8" stroke="#c0c4ca"/>
<path d="M141 1062v14M141 1067c3 0 5-1 5-4" stroke="#9da5b4"/><circle cx="141" cy="1063" r="1.5" stroke="#9da5b4"/>
<path d="M206 1069a5 5 0 0 1 9-3M216 1069a5 5 0 0 1-9 3M215 1063v3h-3M207 1075v-3h3" stroke="#9da5b4"/>
<circle cx="241" cy="1069" r="5.5" stroke="#9da5b4"/><path d="M239 1067l4 4M243 1067l-4 4" stroke="#9da5b4"/>
<path d="M269 1064l5 9h-10z" stroke="#9da5b4"/>
<path d="M303 1069l3 4 5-8" stroke="#9da5b4"/>
<path d="M1066 1074v-2c0-2 2-3 4-3M1068 1064h4v5h-4zM1072 1072l3 3" stroke="#9da5b4"/>
<path d="M1100 1063c-3 0-4 2-4 4v4l-1 2h10l-1-2v-4c0-2-1-4-4-4zM1098 1075h4" stroke="#9da5b4"/>
<path d="M110 1066l5 3-5 3M120 1066l-3 3 3 3" stroke="#c8d6f0" stroke-width="1.3"/>
</g>
<path d="M1114 738l3 4h-6zM1114 1054l3-4h-6z" fill="#555"/>
<circle cx="1094" cy="355" r="1" fill="#aaa"/><circle cx="1099" cy="355" r="1" fill="#aaa"/><circle cx="1104" cy="355" r="1" fill="#aaa"/>
<circle cx="1094" cy="715" r="1" fill="#aaa"/><circle cx="1099" cy="715" r="1" fill="#aaa"/><circle cx="1104" cy="715" r="1" fill="#aaa"/>
<path d="M167 347l-8 7-3-2.500-1 1 3 3-3 3 1 1 3-2.500 8 7 4-1.500v-14zM168 351v10l-5-5z" fill="#2a8fdc" fill-rule="evenodd"/>
<text x="110" y="606" font-family="Liberation Sans" font-size="19" fill="#6a707c" textLength="24" lengthAdjust="spacingAndGlyphs">TEX</text>
<text x="110" y="658" font-family="Noto Sans CJK SC" font-size="24" fill="#6a707c">知</text>
<text x="112" y="704" font-family="Liberation Sans" font-size="20" font-weight="bold" fill="#6a707c">R</text>
<path d="M133 693c0-5-5-8-11-8s-12 3-12 8 5 8 10 8" fill="none" stroke="#6a707c" stroke-width="2.5"/>
</svg>

<!-- typora -->
<div class="a" style="left:1120px;top:350px;width:800px;height:730px;background:#363b40;border-radius:12px 12px 0 0;overflow:hidden;box-shadow:0 0 8px rgba(0,0,0,.4)">
<div class="a" style="left:0;top:0;width:800px;height:55px;background:#2b2b2b;border-top:1px solid #444"></div>
<div class="a" style="left:0;top:55px;width:240px;height:675px;background:#2e3033"></div>
<div class="a" style="left:132px;top:105px;width:84px;height:2px;background:#eee"></div>
<div class="a" style="left:232px;top:109px;width:8px;height:484px;background:#66686c"></div>
<div class="a" style="left:792px;top:57px;width:8px;height:42px;background:#606468"></div>
<div class="a" style="left:240px;top:701px;width:560px;height:1px;background:#4c5156"></div>
</div>
<div class="a c" style="left:1519px;top:355px;font-size:15.7px;font-weight:bold;line-height:20px;color:#eee">My Linux.md - Typora</div>
<svg style="left:1830px;top:355px" width="90" height="20" viewBox="1830 355 90 20">
<path d="M1837 370h8" stroke="#c8c8c8" stroke-width="1.8"/><rect x="1870" y="361.5" width="6.5" height="6.5" fill="none" stroke="#c8c8c8" stroke-width="1.8"/><path d="M1901 361l8 8M1909 361l-8 8" stroke="#c8c8c8" stroke-width="1.8"/>
</svg>
<div class="a" style="left:1126px;top:383px;font-size:15.5px;line-height:20px;color:#b4b4b4">File</div>
<div class="a" style="left:1165px;top:383px;font-size:15.5px;line-height:20px;color:#b4b4b4">Edit</div>
<div class="a" style="left:1204px;top:383px;font-size:15.5px;line-height:20px;color:#b4b4b4">Paragraph</div>
<div class="a" style="left:1288px;top:383px;font-size:15.5px;line-height:20px;color:#b4b4b4">Format</div>
<div class="a" style="left:1352px;top:383px;font-size:15.5px;line-height:20px;color:#b4b4b4">View</div>
<div class="a" style="left:1398px;top:383px;font-size:15.5px;line-height:20px;color:#b4b4b4">Themes</div>
<div class="a" style="left:1467px;top:383px;font-size:15.5px;line-height:20px;color:#b4b4b4">Help</div>
<div class="out" style="left:1172px;top:424px;color:#85898e">Files</div>
<div class="out" style="left:1270px;top:424px;color:#f0f0f0;font-weight:bold">Outline</div>
<div class="out" style="left:1138px;top:468px;font-weight:bold;color:#b6bbc0">My Linux</div>
<div class="out" style="left:1152px;top:500px">基础知识</div>
<div class="out" style="left:1166px;top:532px">安装命令</div>
<div class="out" style="left:1152px;top:565px">重要配置</div>
<div class="out" style="left:1166px;top:597px">安装中文输入法</div>
<div class="out" style="left:1166px;top:629px">主题自定义</div>
<div class="out" style="left:1166px;top:661px">配置终端</div>
<div class="out" style="left:1166px;top:693px">安装VsCode &amp; LaTex</div>
<div class="out" style="left:1166px;top:726px">QQ &amp; WeChat &amp; 网易云 &amp;</div>
<div class="out" style="left:1166px;top:750px">WPS</div>
<div class="out" style="left:1166px;top:782px">安装g++, miniforge</div>
<div class="out" style="left:1166px;top:814px">安装Blog配置</div>
<div class="out" style="left:1166px;top:846px">安装TensorFlow &amp; Jupyter</div>
<div class="out" style="left:1154px;top:878px">U buntu优化</div>
<div class="out" style="left:1166px;top:911px">主题配置-背景写字</div>
<div class="out" style="left:1166px;top:943px">自定义动态壁纸</div>
<div class="out" style="left:1166px;top:975px">使用Clash科学上网</div>
<div class="out" style="left:1166px;top:1007px">自定义菜单</div>
<div class="out" style="left:1154px;top:1039px">U buntu常用命令</div>
<div class="out" style="left:1166px;top:1069px">wget</div>

<div class="a" style="left:1390px;top:441px;font-size:52.5px;line-height:70px;color:#dcdcdc;letter-spacing:-.4px">My Linux</div>
<div class="ty" style="left:1390px;top:542px">第一次安装 <span class="e">Ubuntu22.04 LTS</span> 记录下安装遇到的问</div>
<div class="ty" style="left:1390px;top:577px">题和解决方法。</div>
<div class="ty" style="left:1390px;top:646px">安装内容（推荐顺序安装）<span style="margin-left:9px">：</span></div>
<div class="a" style="left:1431px;top:714px;width:2px;height:71px;background:#474c52"></div>
<div class="ty" style="left:1464px;top:717px;color:#9a9fa5">开始安装软件前记得换源，安装完<span class="e">Ubuntu</span></div>
<div class="a" style="left:1834px;top:720px;width:1px;height:24px;background:#dfdfdf"></div>
<div class="ty" style="left:1464px;top:753px;color:#9a9fa5">修改<span class="e">apt</span>源，安装完<span class="e">conda</span>，<span class="e">pip</span>。</div>
<div class="ty" style="left:1407px;top:830px">1.</div>
<div class="ty" style="left:1432px;top:830px">中文输入法（使用<span class="e">Fcitx5</span>中的<span class="e">pinyin</span>，注意如果</div>
<div class="ty" style="left:1432px;top:866px">动态链接库版本过高请使用 <span class="code" style="margin-left:4px;margin-right:1px">aptitude</span> 进行适</div>
<div class="ty" style="left:1432px;top:902px">当降级）</div>
<div class="ty" style="left:1407px;top:949px">2.</div>
<div class="ty" style="left:1432px;top:949px">主题自定义（重装<span class="e">Firefox</span>浏览器，安装 <span class="code" style="margin-left:2px">gnome-</span></div>
<div class="ty" style="left:1432px;top:986px"><span class="code" style="padding-left:0">tweaks</span> 和 <span class="code">chrome-gnome-shell</span> 用于主题配</div>
<div class="a" style="left:1360px;top:1052px;width:560px;height:28px;background:#363b40"></div>
<div class="a" style="left:1432px;top:1022px;width:60px;height:29px;overflow:hidden"><div class="ty" style="left:0;top:0">置）</div></div>
<svg style="left:1360px;top:1052px" width="100" height="28"><path d="M18 9l-5 5 5 5" fill="none" stroke="#a0a4a8" stroke-width="1.5"/></svg>
<div class="a" style="left:1398px;top:1056px;font-size:12.5px;line-height:20px;color:#9a9ea3">&lt;/&gt;</div>
<div class="a" style="left:1832px;top:1056px;font-size:13px;line-height:20px;color:#7f8388">3591 Words</div>

<!-- dock -->
<div class="a" style="left:8px;top:261px;width:80px;height:600px;background:rgba(42,36,46,.72);border-radius:36px"></div>
<svg style="left:0;top:0" width="96" height="1080" viewBox="0 0 96 1080">
<defs>
<linearGradient id="dfo" x1="0" y1="0" x2="1" y2="0"><stop offset="0" stop-color="#ff9a70"/><stop offset="1" stop-color="#ff6a68"/></linearGradient>
<linearGradient id="dte" x1="0" y1="0" x2="1" y2="0"><stop offset="0" stop-color="#18e0ec"/><stop offset="1" stop-color="#9a78c8"/></linearGradient>
<linearGradient id="dvs" x1="0" y1="0" x2="1" y2="0"><stop offset="0" stop-color="#4a62ff"/><stop offset="1" stop-color="#70e8d8"/></linearGradient>
<linearGradient id="dty" x1="0" y1="0" x2="1" y2="1"><stop offset="0" stop-color="#ff8a80"/><stop offset=".6" stop-color="#f8d880"/><stop offset="1" stop-color="#b8f0c0"/></linearGradient>
<linearGradient id="dne" x1="0" y1="1" x2="1" y2="0"><stop offset="0" stop-color="#ffd040"/><stop offset="1" stop-color="#ff1068"/></linearGradient>
<linearGradient id="dwp" x1="0" y1="0" x2="1" y2="0"><stop offset="0" stop-color="#4a50ff"/><stop offset=".6" stop-color="#30a8f8"/><stop offset="1" stop-color="#70f0d0"/></linearGradient>
<linearGradient id="ddi" x1="0" y1="0" x2="0" y2="1"><stop offset="0" stop-color="#2a70ff"/><stop offset="1" stop-color="#c020f8"/></linearGradient>
<linearGradient id="dtr" x1="0" y1="0" x2="0" y2="1"><stop offset="0" stop-color="#e87e88"/><stop offset="1" stop-color="#f06a9c"/></linearGradient>
<linearGradient id="ffb" x1="0" y1="0" x2="0" y2="1"><stop offset="0" stop-color="#ff9a20"/><stop offset=".65" stop-color="#ff5a40"/><stop offset="1" stop-color="#e8108c"/></linearGradient>
<radialGradient id="ffc"><stop offset="0" stop-color="#7a50e8"/><stop offset="1" stop-color="#5a38b8"/></radialGradient>
</defs>
<ellipse cx="48" cy="302" rx="19.5" ry="18" fill="url(#ffb)"/>
<path d="M52 280c1 8 9 11 13 16 3 4 3 10 2 13-2 4-5 7-9 9l-6-20z" fill="#ffbd2e"/>
<path d="M29 296c3-5 9-7 13-5l-3-4c4 0 9 1 12 5l2 4-11 6c-2-2-9-3-13-6z" fill="#ff9a20"/>
<path d="M33 296c5-3 10-3 14 0l-6 5z" fill="#ffd066"/>
<circle cx="48" cy="303" r="9" fill="url(#ffc)"/>
<path d="M30 384V349h13l5 5h19M67 362v20H36" fill="none" stroke="url(#dfo)" stroke-width="3" stroke-linecap="round" stroke-linejoin="round"/>
<rect x="44" y="390" width="8" height="2" fill="#fff"/>
<path d="M64 411H34q-6 0-6 6v24q0 6 6 6h29q6 0 6-6V430H49M64 411q5 0 5 5v4" fill="none" stroke="url(#dte)" stroke-width="3" stroke-linecap="round"/>
<path d="M37 421l9 6-9 6" fill="none" stroke="#18dce8" stroke-width="2.5" stroke-linecap="round"/>
<rect x="44" y="454" width="8" height="2" fill="#fff"/>
<path d="M40 513a20.500 20.500 0 1 1 16 0" fill="none" stroke="url(#dvs)" stroke-width="3" stroke-linecap="round"/>
<path d="M58 480l-12 10-6-4.500-3 2v11l3 2 6-4.500 12 10zM53 488v11l-6.500-5.500z" fill="#2ea8ff" fill-rule="evenodd"/>
<rect x="44" y="519" width="8" height="2" fill="#fff"/>
<circle cx="48" cy="557" r="30" fill="#fff" fill-opacity=".24"/>
<path d="M44 537H33q-5 0-5 5v30q0 5 5 5h11M52 537h11q5 0 5 5v8M68 558v14q0 5-5 5H52" fill="none" stroke="url(#dty)" stroke-width="3.2" stroke-linecap="round"/>
<text x="48" y="569" text-anchor="middle" font-family="Liberation Serif" font-size="34" fill="#f8d89a">T</text>
<rect x="44" y="582" width="8" height="2" fill="#fff"/>
<g fill="none" stroke-linecap="round" stroke="url(#dne)" stroke-width="3">
<path d="M31 612c3-6 8-9 13-10M53 602c6 1 12 6 15 12M68 626c-2 6-7 11-13 13M44 641c-8-1-15-7-17-15"/>
<path d="M58 610c-5-3-14-3-18 3-3 4-3 11 2 15 5 4 13 3 16-2 2-4 0-9-5-10-4-1-8 2-7 7"/>
<path d="M50 606c-3 3-2 8 0 11"/>
</g>
<path d="M29 671h22l-9 0 8 18M50 689l8-18h10l-15 28M29 671l13 28 8-14" fill="none" stroke="url(#dwp)" stroke-width="3.5" stroke-linejoin="round"/>
<path d="M26 720.500h44" stroke="#fff" stroke-opacity=".2"/>
<rect x="29" y="739.500" width="38" height="37" rx="5" fill="none" stroke="url(#ddi)" stroke-width="3"/>
<g fill="none" stroke="#8040f0" stroke-width="1.5"><circle cx="48" cy="754" r="10"/><circle cx="48" cy="754" r="4.5"/></g>
<circle cx="48" cy="754" r="1.5" fill="#c040f0"/>
<path d="M36 770h17" stroke="#c030f8" stroke-width="2"/><path d="M56 770h7" stroke="#d060f8" stroke-width="1.5" stroke-dasharray="2 2"/>
<g fill="none" stroke="url(#dtr)" stroke-width="2.4"><path d="M31 812.500h34M41 812v-5h14v5M36 813v25h24v-25M44 820v12M52 820v12"/></g>
</svg>
</body></html>
